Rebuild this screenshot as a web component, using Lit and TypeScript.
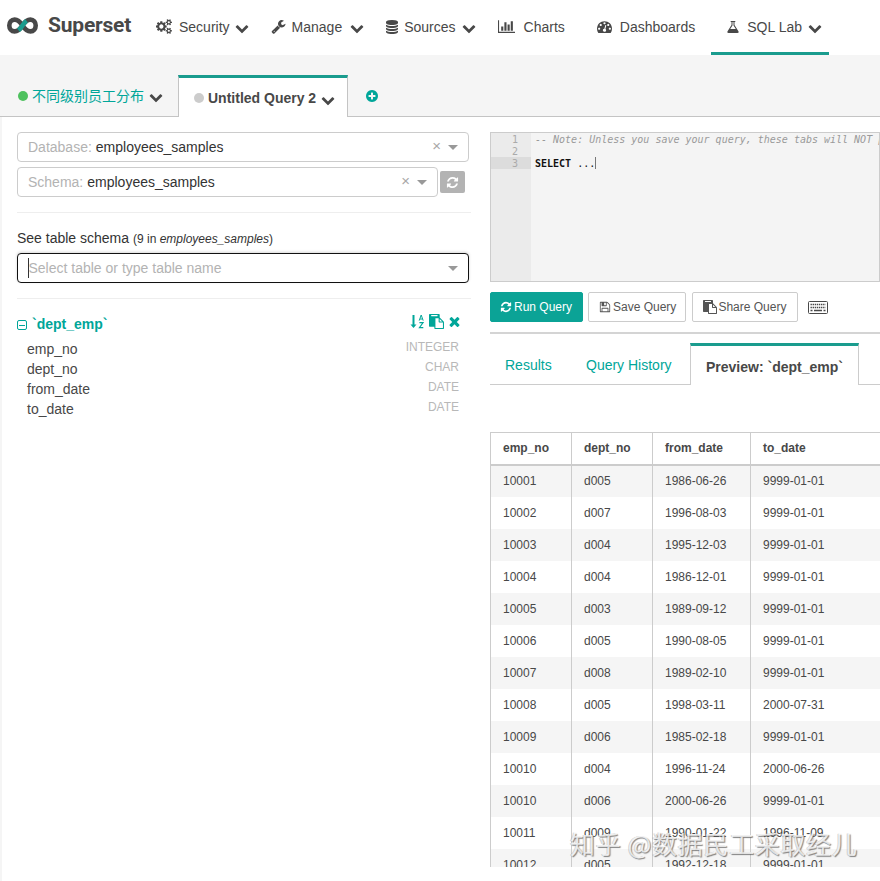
import { LitElement, html, css } from "lit";
import { customElement } from "lit/decorators.js";

const P: Record<string, [number, string]> = {
  chevron: [1792, "M1683 808l-742 741q-19 19-45 19t-45-19l-742-741q-19-19-19-45.5t19-45.5l166-165q19-19 45-19t45 19l531 531 531-531q19-19 45-19t45 19l166 165q19 19 19 45.5t-19 45.5z"],
  wrench: [1792, "M448 1472q0-26-19-45t-45-19-45 19-19 45 19 45 45 19 45-19 19-45zm644-420l-682 682q-37 37-90 37-52 0-91-37l-106-108q-38-36-38-90 0-53 38-91l681-681q39 98 114.5 173.5t173.5 114.5zm634-435q0 39-23 106-47 134-164.5 217.5t-258.5 83.5q-185 0-316.5-131.5t-131.5-316.5 131.5-316.5 316.5-131.5q58 0 121.5 16.5t107.5 46.5q16 11 16 28t-16 28l-293 169v224l193 107q5-3 79-48.5t135.5-81 70.5-35.5q15 0 23.5 10t8.5 25z"],
  database: [1792, "M896 768q237 0 443-43t325-127v170q0 69-103 128t-280 93.5-385 34.5-385-34.5-280-93.5-103-128v-170q119 84 325 127t443 43zm0 768q237 0 443-43t325-127v170q0 69-103 128t-280 93.5-385 34.5-385-34.5-280-93.5-103-128v-170q119 84 325 127t443 43zm0-384q237 0 443-43t325-127v170q0 69-103 128t-280 93.5-385 34.5-385-34.5-280-93.5-103-128v-170q119 84 325 127t443 43zm0-1152q208 0 385 34.5t280 93.5 103 128v128q0 69-103 128t-280 93.5-385 34.5-385-34.5-280-93.5-103-128v-128q0-69 103-128t280-93.5 385-34.5z"],
  chart: [2048, "M640 896v512h-256v-512h256zm384-512v1024h-256v-1024h256zm1024 1152v128h-2048v-1536h128v1408h1920zm-640-896v768h-256v-768h256zm384-384v1152h-256v-1152h256z"],
  plus: [1792, "M1344 960v-128q0-26-19-45t-45-19h-256v-256q0-26-19-45t-45-19h-128q-26 0-45 19t-19 45v256h-256q-26 0-45 19t-19 45v128q0 26 19 45t45 19h256v256q0 26 19 45t45 19h128q26 0 45-19t19-45v-256h256q26 0 45-19t19-45zm320-64q0 209-103 385.5t-279.5 279.5-385.5 103-385.5-103-279.5-279.5-103-385.5 103-385.5 279.5-279.5 385.5-103 385.5 103 279.5 279.5 103 385.5z"],
  refresh: [1792, "M1639 1056q0 5-1 7-64 268-268 434.5t-478 166.5q-146 0-282.5-55t-243.5-157l-129 129q-19 19-45 19t-45-19-19-45v-448q0-26 19-45t45-19h448q26 0 45 19t19 45-19 45l-137 137q71 66 161 102t187 36q134 0 250-65t186-179q11-17 53-117 8-23 30-23h192q13 0 22.5 9.5t9.5 22.5zm25-800v448q0 26-19 45t-45 19h-448q-26 0-45-19t-19-45 19-45l138-138q-148-137-349-137-134 0-250 65t-186 179q-11 17-53 117-8 23-30 23h-199q-13 0-22.5-9.5t-9.5-22.5v-7q65-268 270-434.5t480-166.5q146 0 284 55.5t245 156.5l130-129q19-19 45-19t45 19 19 45z"],
  times: [1792, "M1490 1322q0 40-28 68l-136 136q-28 28-68 28t-68-28l-294-294-294 294q-28 28-68 28t-68-28l-136-136q-28-28-28-68t28-68l294-294-294-294q-28-28-28-68t28-68l136-136q28-28 68-28t68 28l294 294 294-294q28-28 68-28t68 28l136 136q28 28 28 68t-28 68l-294 294 294 294q28 28 28 68z"],
  flask: [1792, "M1591 1448q56 89 21.5 152.5t-140.5 63.5h-1152q-106 0-140.5-63.5t21.5-152.5l503-793v-399h-64q-26 0-45-19t-19-45 19-45 45-19h512q26 0 45 19t19 45-19 45-45 19h-64v399zm-779-725l-272 429h712l-272-429-20-31v-436h-128v436z"],
  paste: [1792, "M768 1664h896v-640h-416q-40 0-68-28t-28-68v-416h-384v1152zm256-1440v-64q0-13-9.5-22.5t-22.5-9.5h-704q-13 0-22.5 9.5t-9.5 22.5v64q0 13 9.5 22.5t22.5 9.5h704q13 0 22.5-9.5t9.5-22.5zm256 672h299l-299-299v299zm512 128v672q0 40-28 68t-68 28h-960q-40 0-68-28t-28-68v-160h-544q-40 0-68-28t-28-68v-1344q0-40 28-68t68-28h1088q40 0 68 28t28 68v328q21 13 36 28l408 408q28 28 48 76t20 88z"],
  save: [1792, "M512 1536h768v-384h-768v384zm896 0h128v-896q0-14-10-38.5t-20-34.5l-281-281q-10-10-34-20t-39-10v416q0 40-28 68t-68 28h-576q-40 0-68-28t-28-68v-416h-128v1280h128v-416q0-40 28-68t68-28h832q40 0 68 28t28 68v416zm-384-928v-320q0-13-9.5-22.5t-22.5-9.5h-192q-13 0-22.5 9.5t-9.5 22.5v320q0 13 9.5 22.5t22.5 9.5h192q13 0 22.5-9.5t9.5-22.5zm640 32v928q0 40-28 68t-68 28h-1344q-40 0-68-28t-28-68v-1344q0-40 28-68t68-28h928q40 0 88 20t76 48l280 280q28 28 48 76t20 88z"],
  dash: [1792, "M384 1152q0-53-37.5-90.5t-90.5-37.5-90.5 37.5-37.5 90.5 37.5 90.5 90.5 37.5 90.5-37.5 37.5-90.5zm192-448q0-53-37.5-90.5t-90.5-37.5-90.5 37.5-37.5 90.5 37.5 90.5 90.5 37.5 90.5-37.5 37.5-90.5zm428 481l101-382q6-26-7.5-48.5t-38.5-29.5-48 6.5-30 39.5l-101 382q-60 5-107 43.5t-63 98.5q-20 77 20 146t117 89 146-20 89-117q16-60-6-117t-72-91zm660-33q0-53-37.5-90.5t-90.5-37.5-90.5 37.5-37.5 90.5 37.5 90.5 90.5 37.5 90.5-37.5 37.5-90.5zm-640-640q0-53-37.5-90.5t-90.5-37.5-90.5 37.5-37.5 90.5 37.5 90.5 90.5 37.5 90.5-37.5 37.5-90.5zm448 192q0-53-37.5-90.5t-90.5-37.5-90.5 37.5-37.5 90.5 37.5 90.5 90.5 37.5 90.5-37.5 37.5-90.5zm320 448q0 261-141 483-19 29-54 29h-1402q-35 0-54-29-141-221-141-483 0-182 71-348t191-286 286-191 348-71 348 71 286 191 191 286 71 348z"],
  cogs: [1920, "M896 896q0-106-75-181t-181-75-181 75-75 181 75 181 181 75 181-75 75-181zm768 512q0-52-38-90t-90-38-90 38-38 90q0 53 37.5 90.5t90.5 37.5 90.5-37.5 37.5-90.5zm0-1024q0-52-38-90t-90-38-90 38-38 90q0 53 37.5 90.5t90.5 37.5 90.5-37.5 37.5-90.5zm-384 421v185q0 10-7 19.5t-16 10.5l-155 24q-11 35-32 76 34 48 90 115 7 11 7 20 0 12-7 19-23 30-82.5 89.5t-78.5 59.5q-11 0-21-7l-115-90q-37 19-77 31-11 108-23 155-7 24-30 24h-186q-11 0-20-7.5t-10-17.5l-23-153q-34-10-75-31l-118 89q-7 7-20 7-11 0-21-8-144-133-144-160 0-9 7-19 10-14 41-53t47-61q-23-44-35-82l-152-24q-10-1-17-9.5t-7-19.5v-185q0-10 7-19.5t16-10.5l155-24q11-35 32-76-34-48-90-115-7-11-7-20 0-12 7-20 22-30 82-89t79-59q11 0 21 7l115 90q34-18 77-32 11-108 23-154 7-24 30-24h186q11 0 20 7.5t10 17.5l23 153q34 10 75 31l118-89q8-7 20-7 11 0 21 8 144 133 144 160 0 8-7 19-12 16-42 54t-45 60q23 48 34 82l152 23q10 2 17 10.5t7 19.5zm640 533v140q0 16-149 31-12 27-30 52 51 113 51 138 0 4-4 7-122 71-124 71-8 0-46-47t-52-68q-20 2-30 2t-30-2q-14 21-52 68t-46 47q-2 0-124-71-4-3-4-7 0-25 51-138-18-25-30-52-149-15-149-31v-140q0-16 149-31 13-29 30-52-51-113-51-138 0-4 4-7 4-2 35-20t59-34 30-16q8 0 46 46.5t52 67.5q20-2 30-2t30 2q51-71 92-112l6-2q4 0 124 70 4 3 4 7 0 25-51 138 17 23 30 52 149 15 149 31zm0-1024v140q0 16-149 31-12 27-30 52 51 113 51 138 0 4-4 7-122 71-124 71-8 0-46-47t-52-68q-20 2-30 2t-30-2q-14 21-52 68t-46 47q-2 0-124-71-4-3-4-7 0-25 51-138-18-25-30-52-149-15-149-31v-140q0-16 149-31 13-29 30-52-51-113-51-138 0-4 4-7 4-2 35-20t59-34 30-16q8 0 46 46.5t52 67.5q20-2 30-2t30 2q51-71 92-112l6-2q4 0 124 70 4 3 4 7 0 25-51 138 17 23 30 52 149 15 149 31z"],
};

const icon = (name: string, cls = "") => {
  const [w, d] = P[name];
  return html`<svg class="ic ${cls}" viewBox="0 0 ${w} 1792" fill="currentColor"><path d=${d}></path></svg>`;
};

const rows = [
  ["10001", "d005", "1986-06-26", "9999-01-01"],
  ["10002", "d007", "1996-08-03", "9999-01-01"],
  ["10003", "d004", "1995-12-03", "9999-01-01"],
  ["10004", "d004", "1986-12-01", "9999-01-01"],
  ["10005", "d003", "1989-09-12", "9999-01-01"],
  ["10006", "d005", "1990-08-05", "9999-01-01"],
  ["10007", "d008", "1989-02-10", "9999-01-01"],
  ["10008", "d005", "1998-03-11", "2000-07-31"],
  ["10009", "d006", "1985-02-18", "9999-01-01"],
  ["10010", "d004", "1996-11-24", "2000-06-26"],
  ["10010", "d006", "2000-06-26", "9999-01-01"],
  ["10011", "d009", "1990-01-22", "1996-11-09"],
  ["10012", "d005", "1992-12-18", "9999-01-01"],
];

const cols = [
  ["emp_no", "INTEGER"],
  ["dept_no", "CHAR"],
  ["from_date", "DATE"],
  ["to_date", "DATE"],
];

const navItems: [string, string, string, string][] = [
  ["cogs", "i-cogs", "Security", "s1"],
  ["wrench", "i-wrench", "Manage", "s2"],
  ["database", "i-db", "Sources", "s3"],
  ["chart", "i-chart", "Charts", ""],
  ["dash", "i-dash", "Dashboards", "s5"],
];

@customElement("app-root")
export class AppRoot extends LitElement {
  static styles = css`
    :host {
      display: block;
      position: relative;
      width: 880px;
      height: 881px;
      overflow: hidden;
      background: #fff;
      color: #484848;
      font: 14px/20px "Liberation Sans", Arial, sans-serif;
    }
    .ic { display: block; flex: none; width: 14px; height: 14px; }

    .nav { display: flex; height: 55px; background: #fff; }
    .brand { display: flex; align-items: center; width: 140px; padding: 0 0 5px 7px; box-sizing: border-box; gap: 10px; }
    .logo { width: 31px; height: 17px; display: block; flex: none; }
    .brand b { font: 700 21px/24px Roboto, sans-serif; color: #484848; letter-spacing: -0.2px; }
    .item { display: flex; align-items: center; padding: 0 16px 2px; color: #484848; box-sizing: border-box; }
    .item.s1 { padding-right: 6px; }
    .item.s1 .chev { margin-left: 5px; }
    .item.s2 { padding-right: 5px; }
    .item.s2 .chev { margin-left: 8px; }
    .item.s3 { padding-right: 6px; }
    .item.s5 { padding-right: 16px; }
    .item.on { border-bottom: 3px solid #1a9c8e; padding: 1px 0 0 15px; width: 118px; }
    .i-cogs { width: 16px; height: 15px; margin-right: 7px; }
    .i-wrench { width: 15px; height: 15px; margin-right: 6px; }
    .i-db { width: 14px; height: 14px; margin-right: 5px; }
    .i-chart { width: 17px; height: 15px; margin-right: 9px; }
    .i-dash { width: 15px; height: 15px; margin-right: 8px; }
    .i-flask { width: 14px; height: 14px; margin-right: 7px; }
    .chev { width: 14px; height: 14px; margin-left: 6px; color: #484848; position: relative; top: 1px; }

    .tabbar { display: flex; align-items: flex-end; height: 62px; box-sizing: border-box; padding: 0 0 0 18px; background: #f5f5f5; border-bottom: 1px solid #c4c4c4; }
    .tab1 { display: flex; align-items: center; width: 160px; height: 42px; padding-top: 2px; box-sizing: border-box; color: #00a699; font-family: "Liberation Sans", "Noto Sans CJK SC", sans-serif; }
    .tab1 .chev { margin-left: 5px; }
    .dot { width: 10px; height: 10px; border-radius: 50%; flex: none; margin-right: 4px; }
    .dot.g { background: #4ec15e; }
    .dot.x { background: #ccc; }
    .tab2 { display: flex; align-items: center; width: 170px; height: 42px; margin-bottom: -1px; box-sizing: border-box; padding: 0 0 0 15px; background: #fff; border: 1px solid #c4c4c4; border-top: 3px solid #1a9c8e; border-bottom: 0; font-weight: 700; color: #484848; }
    .tab2 .chev { margin-left: 5px; top: 2px; }
    .plus { width: 14px; height: 14px; color: #00a699; margin: 0 0 13px 17px; }

    .main { display: flex; height: 764px; border-left: 2px solid #f5f5f5; }
    .left { width: 488px; flex: none; box-sizing: border-box; padding: 15px 21px 0 15px; }
    .right { flex: 1; min-width: 0; overflow: hidden; padding-top: 15px; }

    .sel { display: flex; align-items: center; height: 30px; box-sizing: border-box; border: 1px solid #ccc; border-radius: 4px; padding: 0 10px 0 10px; background: #fff; color: #333; }
    .sel .ph { color: #b3b3b3; margin-right: 4px; }
    .sel .sp { flex: 1; }
    .sel .x { color: #a8a8a8; font-size: 15px; margin-right: 7px; position: relative; top: -1px; }
    .arrow { width: 0; height: 0; border: 5px solid transparent; border-top-color: #999; border-bottom: 0; }
    .row2 { display: flex; align-items: center; margin-top: 5px; }
    .row2 .sel { width: 421px; }
    .rf { width: 25px; height: 22px; margin-left: 2px; background: #b3b3b3; color: #fff; border-radius: 2px; display: flex; align-items: center; justify-content: center; }
    .rf .ic { width: 13px; height: 13px; }
    .hr { height: 1px; background: #eee; margin-right: -2px; }
    .hr.a { margin-top: 15px; }
    .lbl { margin-top: 15px; height: 20px; color: #333; }
    .lbl small { font-size: 12px; }
    .focus { margin-top: 5px; padding-left: 9.5px; border: 1.5px solid #111; box-shadow: 0 -1px 3px rgba(0,0,0,.16); }
    .focus .ph { border-left: 1px solid #333; margin: 0; }
    .hr.b { margin-top: 15px; }
    .thead { display: flex; align-items: center; height: 20px; margin-top: 15px; padding-right: 9px; }
    .minus { width: 10px; height: 10px; box-sizing: border-box; border: 1px solid #00a699; border-radius: 2px; margin: 2px 5px 0 0; display: flex; align-items: center; justify-content: center; flex: none; }
    .minus::after { content: ""; width: 6px; height: 1px; background: #00a699; display: block; }
    .tname { flex: 1; font-weight: 700; color: #00a699; }
    .acts { display: flex; align-items: center; color: #00a699; margin-top: -6px; }
    .acts .iz { width: 15px; height: 15px; margin-right: 4px; }
    .acts .ip { width: 15px; height: 15px; margin-right: 3px; }
    .acts .ix { width: 15px; height: 15px; margin-right: -2px; }
    .cols { margin-top: 5px; }
    .colrow { display: flex; justify-content: space-between; align-items: center; height: 20px; padding: 0 10px; }
    .colrow .t { font-size: 12px; color: #b8b8b8; position: relative; top: -2px; }

    .editor { display: flex; height: 150px; box-sizing: border-box; border: 1px solid #ccc; background: #f4f4f4; font: 10px/14px "DejaVu Sans Mono", monospace; }
    .gutter { width: 40px; background: #ebebeb; color: #aaa; text-align: right; flex: none; }
    .gutter div { padding-right: 13px; height: 12px; }
    .gutter .act { background: #dcdcdc; }
    .code { padding-left: 4px; white-space: nowrap; overflow: hidden; }
    .code div { height: 12px; }
    .cm { color: #9a9a9a; font-style: italic; }
    .sql { color: #111; }
    .sql b { font-weight: 700; }
    .caretline { border-left: 1px solid #777; display: inline-block; height: 12px; vertical-align: top; }

    .btns { display: flex; align-items: center; gap: 5px; height: 30px; margin-top: 10px; }
    .btn { display: flex; align-items: center; height: 30px; box-sizing: border-box; border: 1px solid #ccc; border-radius: 2px; background: #fff; font-size: 12px; color: #555; padding: 0 10px; white-space: nowrap; }
    .btn .ic { width: 12px; height: 12px; margin-right: 2px; }
    .btn.sv { padding-right: 9px; }
    .btn.sh { padding-right: 11px; margin-left: 1px; }
    .btn .ishare { width: 14px; height: 14px; margin-right: 1px; }
    .btn.run { width: 93px; background: #0ba396; border-color: #0ba396; color: #fff; padding-left: 9px; }
    .kb { width: 20px; height: 13px; margin-left: 5px; }
    .rule { height: 2px; background: #d4d4d4; margin-top: 10px; }
    .rtabs { display: flex; align-items: flex-end; height: 41px; margin-top: 9px; box-sizing: content-box; border-bottom: 1px solid #ccc; }
    .rt { color: #00a699; padding: 2px 0 0 15px; height: 41px; box-sizing: border-box; display: flex; align-items: center; width: 96px; }
    .rt.h { width: 104px; padding-left: 0; }
    .rt.on { width: 169px; height: 42px; margin-bottom: -1px; box-sizing: border-box; border: 1px solid #ccc; border-top: 3px solid #1a9c8e; border-bottom: 0; background: #fff; font-weight: 700; color: #484848; padding: 3px 0 0 15px; }
    .tw { height: 435px; overflow: hidden; margin-top: 47px; }
    table { border-collapse: collapse; table-layout: fixed; width: 500px; font-size: 12px; color: #484848; }
    .c1, .c2 { width: 81px; }
    .c3 { width: 98px; }
    .c4 { width: 240px; }
    th { text-align: left; height: 32px; padding: 0 0 0 12px; border: 1px solid #ccc; border-bottom: 2px solid #ccc; font-weight: 700; box-sizing: border-box; }
    td { height: 32px; padding: 0 0 0 12px; border-left: 1px solid #ccc; box-sizing: border-box; }
    tr:nth-child(odd) td { background: #f5f5f5; }

    .wm { position: absolute; left: 570px; top: 827px; font: 25px/32px "Noto Sans CJK SC", sans-serif; color: rgba(255,255,255,.75); text-shadow: 1px 1px 1px rgba(90,90,90,.75), -1px 0 0 rgba(150,150,150,.4); white-space: nowrap; letter-spacing: 0.7px; }
  `;

  render() {
    return html`
      <div class="nav">
        <div class="brand">
          <svg class="logo" viewBox="0 0 31 17" fill="none" stroke-width="4.6">
            <path d="M15.5 8.5C13 4.5 10.5 2.6 7.6 2.6 4.4 2.6 2.3 5.2 2.3 8.5s2.1 5.9 5.3 5.9c2.9 0 5.4-1.9 7.9-5.9z" stroke="#484848"></path>
            <path d="M15.5 8.5c2.5-4 5-5.9 7.9-5.9 3.2 0 5.3 2.6 5.3 5.9s-2.1 5.9-5.3 5.9c-2.9 0-5.4-1.9-7.9-5.9z" stroke="#484848"></path>
            <path d="M11.5 13.2C13 12 14.2 10.5 15.5 8.5c1.3-2 2.5-3.5 4-4.7" stroke="#1a9c8e"></path>
          </svg>
          <b>Superset</b>
        </div>
        ${navItems.map(
          ([n, c, t, s]) => html`<div class="item ${s}">${icon(n, c)}<span>${t}</span>${s && s !== "s5" ? icon("chevron", "chev") : ""}</div>`
        )}
        <div class="item on">${icon("flask", "i-flask")}<span>SQL Lab</span>${icon("chevron", "chev")}</div>
      </div>

      <div class="tabbar">
        <div class="tab1"><span class="dot g"></span><span>不同级别员工分布</span>${icon("chevron", "chev")}</div>
        <div class="tab2"><span class="dot x"></span><span>Untitled Query 2</span>${icon("chevron", "chev")}</div>
        ${icon("plus", "plus")}
      </div>

      <div class="main">
        <div class="left">
          <div class="sel"><span class="ph">Database:</span><span>employees_samples</span><span class="sp"></span><span class="x">×</span><span class="arrow"></span></div>
          <div class="row2">
            <div class="sel"><span class="ph">Schema:</span><span>employees_samples</span><span class="sp"></span><span class="x">×</span><span class="arrow"></span></div>
            <div class="rf">${icon("refresh")}</div>
          </div>
          <div class="hr a"></div>
          <div class="lbl">See table schema <small>(9 in <i>employees_samples</i>)</small></div>
          <div class="sel focus"><span class="ph">Select table or type table name</span><span class="sp"></span><span class="arrow"></span></div>
          <div class="hr b"></div>
          <div class="thead">
            <span class="minus"></span>
            <span class="tname">\`dept_emp\`</span>
            <span class="acts">
              <svg class="ic iz" viewBox="0 0 15 15" fill="none" stroke="currentColor">
                <path d="M3.5 1v11" stroke-width="2"></path>
                <path d="M.5 10.5h6L3.5 14z" fill="currentColor" stroke="none"></path>
                <path d="M9.2 6.6 11.2 1l2 5.6M10 5h2.5" stroke-width="1"></path>
                <path d="M9.4 8.6h3.7l-3.7 5h3.9" stroke-width="1.1"></path>
              </svg>
              ${icon("paste", "ip")}
              ${icon("times", "ix")}
            </span>
          </div>
          <div class="cols">
            ${cols.map(([n, t]) => html`<div class="colrow"><span>${n}</span><span class="t">${t}</span></div>`)}
          </div>
        </div>

        <div class="right">
          <div class="editor">
            <div class="gutter"><div>1</div><div>2</div><div class="act">3</div></div>
            <div class="code">
              <div class="cm">-- Note: Unless you save your query, these tabs will NOT persist if you clear your cookies</div>
              <div></div>
              <div class="sql"><b>SELECT</b> ...<span class="caretline"></span></div>
            </div>
          </div>
          <div class="btns">
            <div class="btn run">${icon("refresh")}Run Query</div>
            <div class="btn sv">${icon("save")}Save Query</div>
            <div class="btn sh">${icon("paste", "ishare")}Share Query</div>
            <svg class="kb" viewBox="0 0 20 13" fill="none">
              <rect x=".5" y=".5" width="19" height="12" rx="1" stroke="#484848"></rect>
              <path d="M2.5 3.5h15M2.5 6.5h15" stroke="#484848" stroke-width="1.4" stroke-dasharray="1.4 .7"></path>
              <path d="M2.5 9.5h2M6 9.5h8M15.5 9.5h2" stroke="#484848" stroke-width="1.4"></path>
            </svg>
          </div>
          <div class="rule"></div>
          <div class="rtabs">
            <div class="rt">Results</div>
            <div class="rt h">Query History</div>
            <div class="rt on">Preview: \`dept_emp\`</div>
          </div>
          <div class="tw">
            <table>
              <colgroup><col class="c1" /><col class="c2" /><col class="c3" /><col class="c4" /></colgroup>
              <thead><tr><th>emp_no</th><th>dept_no</th><th>from_date</th><th>to_date</th></tr></thead>
              <tbody>
                ${rows.map((r) => html`<tr>${r.map((c) => html`<td>${c}</td>`)}</tr>`)}
              </tbody>
            </table>
          </div>
        </div>
      </div>
      <div class="wm">知乎 @数据民工采取经儿</div>
    `;
  }
}
